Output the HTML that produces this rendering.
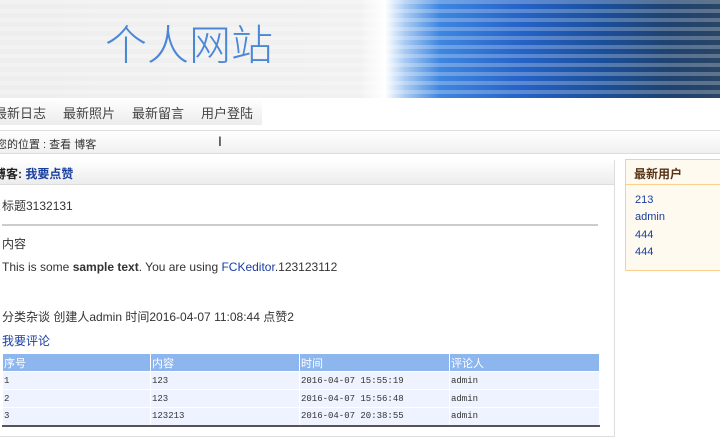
<!DOCTYPE html>
<html><head><meta charset="utf-8"><style>
*{margin:0;padding:0;box-sizing:border-box}
body{width:720px;height:448px;overflow:hidden;background:#fff;font-family:"Liberation Sans","Noto Sans CJK SC",sans-serif;font-size:12px;color:#333;position:relative}
.a{position:absolute;white-space:nowrap}
#hdr{left:0;top:0;width:720px;height:98px;background:
repeating-linear-gradient(180deg,rgba(255,255,255,.25) 0 4px,rgba(0,0,0,0) 4px 9px),
linear-gradient(90deg,#eeeeee 0,#f1f1f1 360px,#ffffff 385px,#a8cbf3 405px,#3f86e0 440px,#2563c6 520px,#1b4f9c 600px,#1f426f 670px,#2a4566 720px)}
#title{left:105px;top:12px;font-size:42px;color:#4a87d6;font-family:"Noto Sans CJK SC",sans-serif;font-weight:300}
#nav{left:0;top:98px;width:262px;height:27px;background:linear-gradient(#fff,#ececec)}
.nav{top:103px;font-size:13px;color:#444}
#crumb{left:0;top:130px;width:720px;height:24px;border-top:1px solid #ddd;border-bottom:1px solid #ddd;background:linear-gradient(#fff,#f0f0f0)}
#main{left:-2px;top:160px;width:617px;height:277px;border:1px solid #ddd}
#mh{left:-1px;top:160px;width:615px;height:25px;background:linear-gradient(#fff,#ececec);border-bottom:1px solid #ddd}
#side{left:625px;top:159px;width:100px;height:112px;border:1px solid #fbd08f;background:#fffaf0}
#sh{left:626px;top:160px;width:100px;height:25px;border-bottom:1px solid #fbd08f}
.su{left:635px;color:#1a3ea0;font-size:11px}
table{position:absolute;left:2px;top:353px;width:597px;border-collapse:collapse;table-layout:fixed;font-family:"Liberation Mono",monospace;font-size:9px;border-bottom:2px solid #555}
td,th{height:18px;text-align:left;font-weight:normal;padding-left:1px;border:1px solid #fff;overflow:hidden}
th{background:#8db6ef;color:#fff;font-family:"Noto Sans CJK SC",sans-serif;font-size:11px}
td{background:#eef3ff;color:#333}
</style></head><body>
<div class="a" id="hdr"></div>
<div class="a" id="title">个人网站</div>
<div class="a" id="nav"></div>
<div class="a nav" style="left:-6px">最新日志</div>
<div class="a nav" style="left:63px">最新照片</div>
<div class="a nav" style="left:132px">最新留言</div>
<div class="a nav" style="left:201px">用户登陆</div>
<div class="a" id="crumb"></div>
<div class="a" style="left:-4px;top:136px;font-size:11px">您的位置 : 查看 博客</div>
<div class="a" style="left:218px;top:133px;font-size:14px;color:#222">I</div>
<div class="a" id="main"></div>
<div class="a" id="mh"></div>
<div class="a" style="left:-6px;top:165px;font-size:12px;font-weight:bold;color:#222">博客: <span style="color:#1a3ea0">我要点赞</span></div>
<div class="a" style="left:2px;top:197px;font-size:12px">标题3132131</div>
<div class="a" style="left:2px;top:224px;width:596px;height:2px;background:#ccc"></div>
<div class="a" style="left:2px;top:235px;font-size:12px">内容</div>
<div class="a" style="left:2px;top:260px;font-size:12px">This is some <b>sample text</b>. You are using <span style="color:#1a3ea0">FCKeditor</span>.123123112</div>
<div class="a" style="left:2px;top:308px;font-size:12px">分类杂谈 创建人admin 时间2016-04-07 11:08:44 点赞2</div>
<div class="a" style="left:2px;top:332px;font-size:12px;color:#1a3ea0">我要评论</div>
<table>
<colgroup><col style="width:148px"><col style="width:149px"><col style="width:150px"><col style="width:150px"></colgroup>
<tr><th>序号</th><th>内容</th><th>时间</th><th>评论人</th></tr>
<tr><td>1</td><td>123</td><td>2016-04-07 15:55:19</td><td>admin</td></tr>
<tr><td>2</td><td>123</td><td>2016-04-07 15:56:48</td><td>admin</td></tr>
<tr><td>3</td><td>123213</td><td>2016-04-07 20:38:55</td><td>admin</td></tr>
</table>
<div class="a" id="side"></div>
<div class="a" id="sh"></div>
<div class="a" style="left:634px;top:165px;font-size:12px;font-weight:bold;color:#5a3414">最新用户</div>
<div class="a su" style="top:194px">213</div>
<div class="a su" style="top:211px">admin</div>
<div class="a su" style="top:229px">444</div>
<div class="a su" style="top:246px">444</div>
</body></html>
